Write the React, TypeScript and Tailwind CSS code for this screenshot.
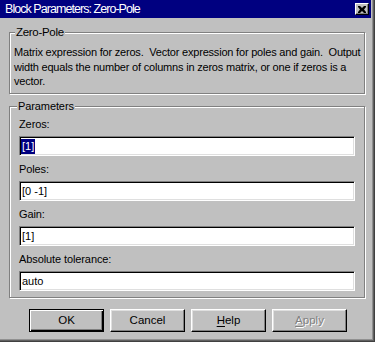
import React from "react";

function Field({ label, value, selected }: { label: string; value: string; selected?: boolean }) {
  return (
    <div className="flex flex-col">
      <div className="h-[14px] leading-[14px] tracking-[-0.1px]">{label}</div>
      <div className="mt-[5px] h-[20px] w-[336px] flex items-center bg-white border border-t-[#808080] border-l-[#808080] border-r-white border-b-white shadow-[inset_1px_1px_0_#000,inset_-1px_-1px_0_#dfdfdf] pl-[1px]">
        {selected ? (
          <span className="px-[1px] h-[15px] leading-[15px] bg-[#000080] text-white">{value}</span>
        ) : (
          <span className="pl-[1px] leading-[15px]">{value}</span>
        )}
      </div>
    </div>
  );
}

function Btn({ children, def, disabled }: { children: React.ReactNode; def?: boolean; disabled?: boolean }) {
  const base = "w-[75px] h-[23px] flex items-center justify-center bg-[#c0c0c0] text-[11.5px]";
  const frame = def
    ? "border border-black shadow-[inset_1px_1px_0_#fff,inset_-1px_-1px_0_#000,inset_-2px_-2px_0_#808080]"
    : "border border-t-white border-l-white border-r-black border-b-black shadow-[inset_-1px_-1px_0_#808080,inset_1px_1px_0_#dfdfdf]";
  return (
    <div className={`${base} ${frame} ${disabled ? "text-[#808080] [text-shadow:1px_1px_0_#fff]" : "text-black"}`}>
      {children}
    </div>
  );
}

export default function App() {
  return (
    <div className="relative w-[375px] h-[342px] overflow-hidden bg-[#c0c0c0] font-['Liberation_Sans',Arial,sans-serif] text-[11px] text-black shadow-[inset_-1px_-1px_0_#404040,inset_-2px_-2px_0_#606060,inset_-3px_-3px_0_#909090]">
      {/* Title bar */}
      <div className="flex items-center h-[18px] w-[371px] bg-[#000080] pl-[5px] pr-[2px]">
        <span className="flex-1 text-white text-[12.5px] tracking-[-0.95px] leading-none pt-[1px]">Block Parameters: Zero-Pole</span>
        <div className="w-[14px] h-[12px] flex items-center justify-center bg-[#c0c0c0] border border-t-white border-l-white border-r-black border-b-black shadow-[inset_-1px_-1px_0_#808080]">
          <svg width="8" height="7" viewBox="0 0 8 7">
            <path d="M0 0h2l2 2 2-2h2v1L6 3.5 8 6v1H6L4 5 2 7H0V6l2-2.5L0 1z" fill="#000" />
          </svg>
        </div>
      </div>

      {/* Zero-Pole group */}
      <div className="relative ml-[9px] mt-[14px] w-[356px] h-[62px] border border-[#808080] shadow-[inset_1px_1px_0_#fff,1px_1px_0_#fff]">
        <span className="absolute left-[5px] top-[-8px] px-[1px] bg-[#c0c0c0] leading-[14px] text-[11.5px] tracking-[-0.3px]">Zero-Pole</span>
        <div className="pl-[4px] pt-[12px] leading-[14.5px] tracking-[-0.2px] whitespace-pre">
          <div>Matrix expression for zeros.  Vector expression for poles and gain.  Output</div>
          <div>width equals the number of columns in zeros matrix, or one if zeros is a</div>
          <div>vector.</div>
        </div>
      </div>

      {/* Parameters group */}
      <div className="relative ml-[9px] mt-[12px] w-[356px] h-[192px] border border-[#808080] shadow-[inset_1px_1px_0_#fff,1px_1px_0_#fff]">
        <span className="absolute left-[7px] top-[-8px] px-[1px] bg-[#c0c0c0] leading-[14px] tracking-[-0.1px]">Parameters</span>
        <div className="flex flex-col gap-[6px] pl-[9px] pt-[10px]">
          <Field label="Zeros:" value="[1]" selected />
          <Field label="Poles:" value="[0 -1]" />
          <Field label="Gain:" value="[1]" />
          <Field label="Absolute tolerance:" value="auto" />
        </div>
      </div>

      {/* Buttons */}
      <div className="flex gap-[6px] ml-[29px] mt-[11px]">
        <Btn def>OK</Btn>
        <Btn>Cancel</Btn>
        <Btn>
          <span>
            <span className="underline underline-offset-2">H</span>elp
          </span>
        </Btn>
        <Btn disabled>
          <span>
            <span className="underline underline-offset-2">A</span>pply
          </span>
        </Btn>
      </div>
    </div>
  );
}
